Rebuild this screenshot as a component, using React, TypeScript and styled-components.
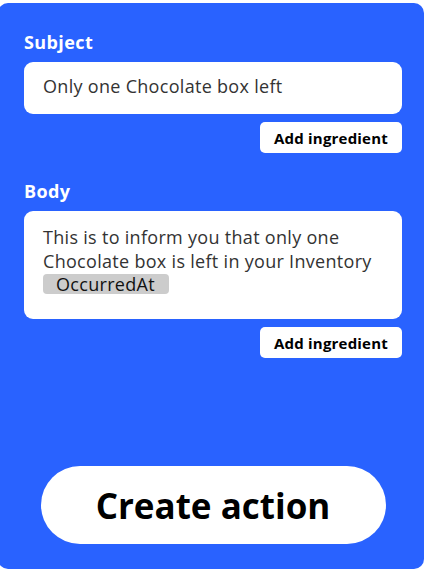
import React from 'react'
import styled, { createGlobalStyle } from 'styled-components'

const GlobalStyle = createGlobalStyle`
    html, body {
        margin: 0;
        padding: 0;
        background: #ffffff;
    }
    body {
        font-family: "Open Sans", Lato, sans-serif;
    }
`

const Panel = styled.div`
    box-sizing: border-box;
    width: 426px;
    height: 566px;
    margin: 3px 0 0 -2px;
    padding: 27px 22px 0 26px;
    background: #2962ff;
    border-radius: 10px;
    display: flex;
    flex-direction: column;
`

const Field = styled.div`
    display: flex;
    flex-direction: column;
    margin-bottom: ${p => p.$gap}px;
`

const Label = styled.label`
    color: #ffffff;
    font-weight: 700;
    font-size: 18px;
    letter-spacing: 0.4px;
    line-height: 24px;
    margin-bottom: 8px;
`

const Box = styled.div`
    box-sizing: border-box;
    background: #ffffff;
    border-radius: 9px;
    min-height: ${p => p.$height}px;
    padding: ${p => p.$pad};
    color: #333333;
    font-size: 18px;
    font-weight: 500;
    letter-spacing: 0.3px;
    line-height: 23.5px;
`

const Pill = styled.span`
    display: inline-block;
    background: #cccccc;
    color: #111111;
    border-radius: 4px;
    padding: 0 14px 0 13px;
    line-height: 20px;
    margin-top: 1px;
`

const IngredientRow = styled.div`
    display: flex;
    justify-content: flex-end;
    margin-top: 8px;
`

const IngredientButton = styled.button`
    border: none;
    background: #ffffff;
    border-radius: 5px;
    height: 31px;
    width: 142px;
    padding: 0;
    font-family: inherit;
    font-weight: 700;
    font-size: 15px;
    letter-spacing: 0.2px;
    color: #000000;
`

const Footer = styled.div`
    display: flex;
    justify-content: center;
    margin-top: auto;
    padding-bottom: 25px;
`

const ActionButton = styled.button`
    border: none;
    background: #ffffff;
    border-radius: 40px;
    width: 345px;
    height: 78px;
    font-family: inherit;
    font-weight: 700;
    font-size: 35px;
    color: #000000;
`

const App = () => (
    <>
        <GlobalStyle />
        <Panel>
            <Field $gap={26}>
                <Label>Subject</Label>
                <Box $height={52} $pad="13px 19px">Only one Chocolate box left</Box>
                <IngredientRow>
                    <IngredientButton>Add ingredient</IngredientButton>
                </IngredientRow>
            </Field>
            <Field $gap={0}>
                <Label>Body</Label>
                <Box $height={108} $pad="15px 19px">
                    This is to inform you that only one Chocolate box is left in your Inventory{' '}
                    <Pill>OccurredAt</Pill>
                </Box>
                <IngredientRow>
                    <IngredientButton>Add ingredient</IngredientButton>
                </IngredientRow>
            </Field>
            <Footer>
                <ActionButton>Create action</ActionButton>
            </Footer>
        </Panel>
    </>
)

export default App
